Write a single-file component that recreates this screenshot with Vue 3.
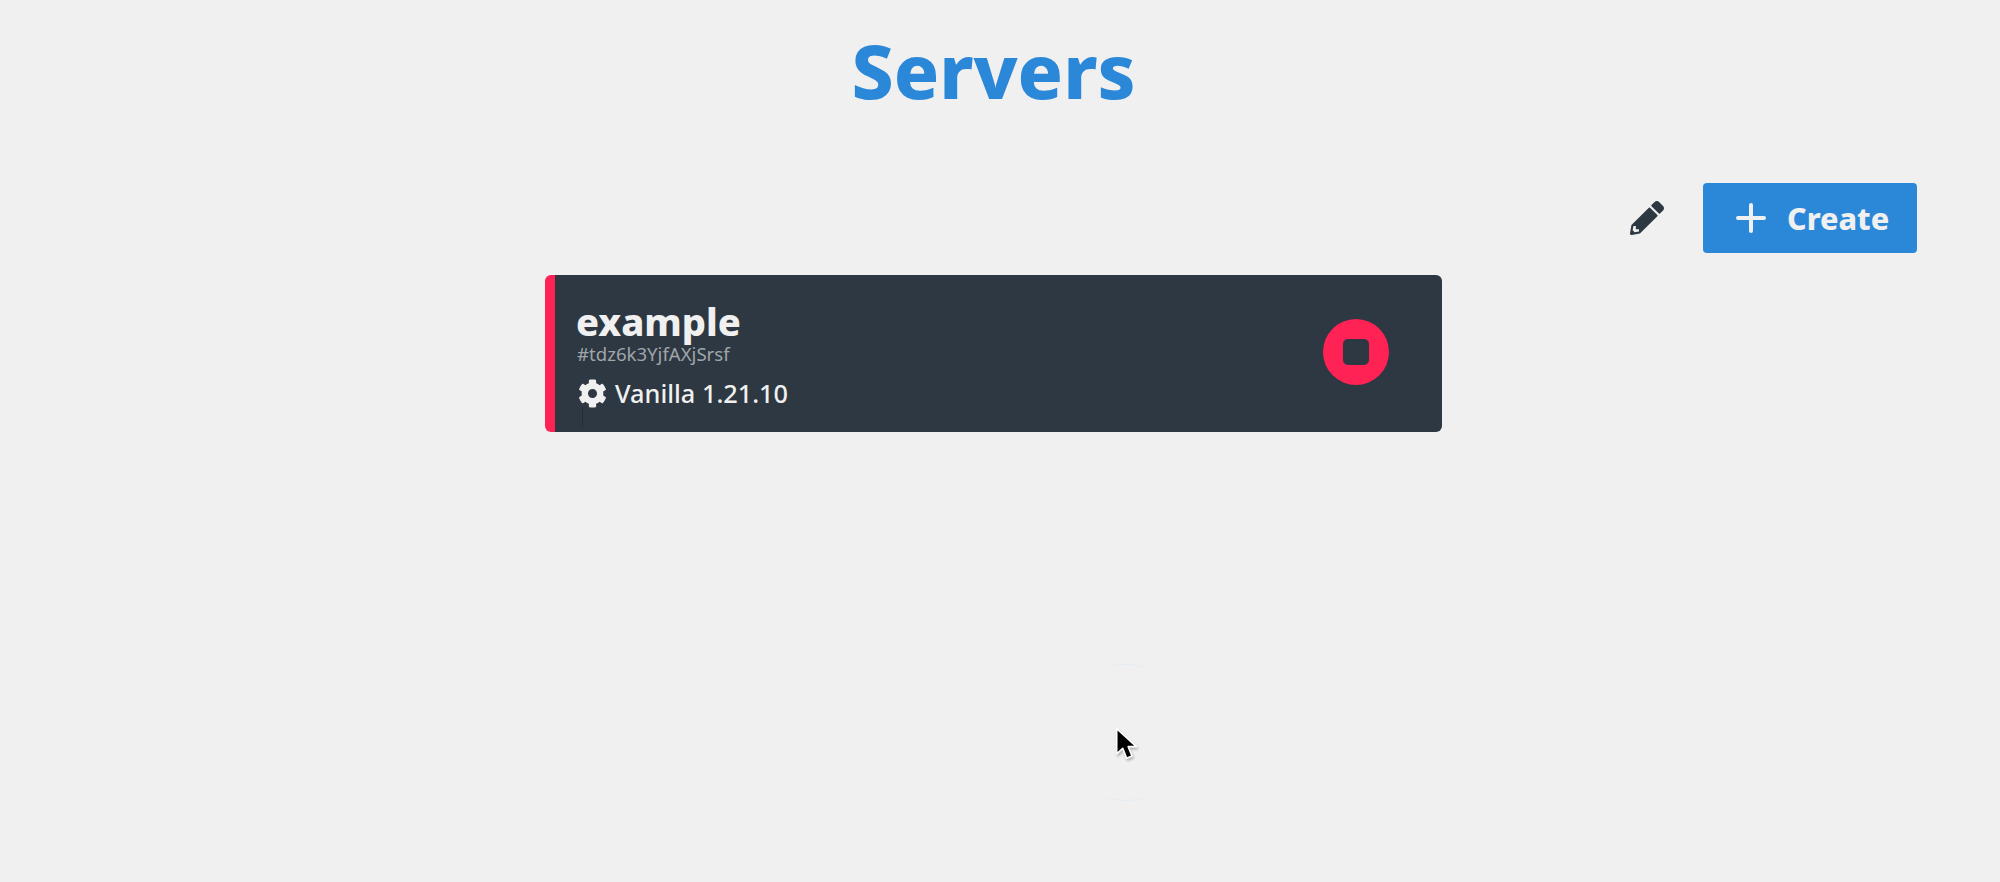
<script setup>
import { ref } from "vue";

const servers = ref([
  { id: "tdz6k3YjfAXjSrsf", name: "example", type: "Vanilla", version: "1.21.10" },
]);
</script>

<template>
  <div class="page">
    <h1 class="title">Servers</h1>

    <div class="toolbar">
      <button class="edit-btn" type="button" aria-label="Edit">
        <svg viewBox="0 0 512 512" width="34" height="34">
          <path
            fill="#2d3842"
            fill-rule="evenodd"
            d="M497.9 142.1l-46.1 46.1c-4.7 4.7-12.3 4.7-17 0l-111-111c-4.7-4.7-4.7-12.3 0-17l46.1-46.1c18.7-18.7 49.1-18.7 67.9 0l60.1 60.1c18.8 18.7 18.8 49.1 0 67.9zM284.2 99.8L21.6 362.4.4 483.9c-2.9 16.4 11.4 30.6 27.8 27.8l121.5-21.3 262.6-262.6c4.7-4.7 4.7-12.3 0-17l-111-111c-4.8-4.7-12.4-4.7-17.1 0zM52 376l-12 66 30 30 66-12v-36H88v-48z"
          />
        </svg>
      </button>
      <button class="create-btn" type="button">
        <svg viewBox="0 0 30 30" width="30" height="30">
          <path d="M15 2v26M2 15h26" stroke="#f0f0f0" stroke-width="4" stroke-linecap="round" />
        </svg>
        <span>Create</span>
      </button>
    </div>

    <div class="list">
      <div v-for="server in servers" :key="server.id" class="card">
        <div class="info">
          <div class="name">{{ server.name }}</div>
          <div class="id">#{{ server.id }}</div>
          <div class="type">
            <svg viewBox="0 0 512 512" width="29" height="29">
              <path
                fill="#f0f0f0"
                d="M487.4 315.7l-42.6-24.6c4.3-23.2 4.3-47 0-70.2l42.6-24.6c4.9-2.8 7.1-8.6 5.5-14-11.1-35.6-30-67.8-54.7-94.6-3.8-4.1-10-5.1-14.8-2.3L380.8 110c-17.9-15.4-38.5-27.3-60.8-35.1V25.8c0-5.6-3.9-10.5-9.4-11.7-36.7-8.2-74.3-7.8-109.2 0-5.5 1.2-9.4 6.1-9.4 11.7V75c-22.2 7.9-42.8 19.8-60.8 35.1L88.7 85.5c-4.9-2.8-11-1.9-14.8 2.3-24.7 26.7-43.6 58.9-54.7 94.6-1.7 5.4.6 11.2 5.5 14L67.3 221c-4.3 23.2-4.3 47 0 70.2l-42.6 24.6c-4.9 2.8-7.1 8.6-5.5 14 11.1 35.6 30 67.8 54.7 94.6 3.8 4.1 10 5.1 14.8 2.3l42.6-24.6c17.9 15.4 38.5 27.3 60.8 35.1v49.2c0 5.6 3.9 10.5 9.4 11.7 36.7 8.2 74.3 7.8 109.2 0 5.500-1.2 9.4-6.1 9.4-11.7v-49.2c22.2-7.9 42.8-19.8 60.8-35.1l42.6 24.6c4.9 2.8 11 1.9 14.8-2.3 24.7-26.7 43.6-58.9 54.7-94.6 1.5-5.5-.7-11.3-5.6-14.1zM256 336c-44.1 0-80-35.9-80-80s35.9-80 80-80 80 35.9 80 80-35.9 80-80 80z"
              />
            </svg>
            <span>{{ server.type }} {{ server.version }}</span>
          </div>
        </div>
        <button class="stop-btn" type="button" aria-label="Stop"><span class="stop-square"></span></button>
        <span class="glitch"></span>
      </div>
    </div>

    <div class="ghost"></div>
    <svg class="cursor" viewBox="0 0 20 32" width="22" height="35">
      <path
        d="M1.500 1.500v23l5.500-5 3.500 9 5-2-3.500-8.500h7.500z"
        fill="#000"
        stroke="#fff"
        stroke-width="1.500"
        stroke-linejoin="round"
      />
    </svg>
  </div>
</template>

<style>
html,
body {
  margin: 0;
  background: #f0f0f0;
}
</style>

<style scoped>
.page {
  position: relative;
  height: 882px;
  overflow: hidden;
  padding-right: 13px;
  box-sizing: border-box;
  background: #f0f0f0;
  font-family: "Noto Sans", "Open Sans", sans-serif;
}

.title {
  margin: 0;
  padding-top: 24px;
  height: 183px;
  box-sizing: border-box;
  text-align: center;
  font-size: 75px;
  line-height: 92px;
  font-weight: 800;
  color: #2b87d8;
}

.toolbar {
  display: flex;
  justify-content: flex-end;
  align-items: center;
  gap: 39px;
  padding-right: 70px;
}

.edit-btn {
  display: flex;
  padding: 0;
  border: none;
  background: none;
}

.create-btn {
  display: flex;
  align-items: center;
  justify-content: flex-start;
  gap: 21px;
  width: 214px;
  height: 70px;
  padding: 0 0 0 33px;
  box-sizing: border-box;
  border: none;
  border-radius: 4px;
  background: #2b87d8;
  color: #f0f0f0;
  font-family: inherit;
  font-size: 30.500px;
  font-weight: 800;
}

.list {
  display: flex;
  flex-direction: column;
  align-items: center;
  margin-top: 22px;
}

.card {
  position: relative;
  display: flex;
  align-items: center;
  justify-content: space-between;
  width: 897px;
  height: 157px;
  box-sizing: border-box;
  padding: 0 53px 0 22px;
  border-left: 10px solid #ff2255;
  border-radius: 6px;
  background: #2d3842;
  color: #f0f0f0;
}

.info {
  display: flex;
  flex-direction: column;
  margin-top: 3px;
}

.name {
  margin-left: -1px;
  font-size: 38px;
  line-height: 42px;
  font-weight: 800;
}

.id {
  margin-top: 1px;
  font-size: 18.600px;
  line-height: 22px;
  color: #a0a5aa;
}

.type {
  display: flex;
  align-items: center;
  gap: 8px;
  margin-top: 11px;
  margin-left: 1px;
  font-size: 25.300px;
  line-height: 34px;
  font-weight: 500;
}

.stop-btn {
  display: flex;
  align-items: center;
  justify-content: center;
  width: 66px;
  height: 66px;
  margin-bottom: 3px;
  padding: 0;
  border: none;
  border-radius: 50%;
  background: #ff2255;
}

.stop-square {
  width: 26px;
  height: 26px;
  border-radius: 5px;
  background: #2d3842;
}

.glitch {
  position: absolute;
  left: 27px;
  bottom: 5px;
  width: 1px;
  height: 20px;
  background: #232c34;
}

.ghost {
  position: absolute;
  left: 1105px;
  top: 664px;
  width: 42px;
  height: 135px;
  border-top: 1px solid #e3ebf3;
  border-bottom: 1px solid #e3ebf3;
  border-radius: 50% / 6px;
}

.cursor {
  position: absolute;
  left: 1115px;
  top: 727px;
  filter: drop-shadow(1px 2px 1px rgba(0, 0, 0, 0.25));
}
</style>
